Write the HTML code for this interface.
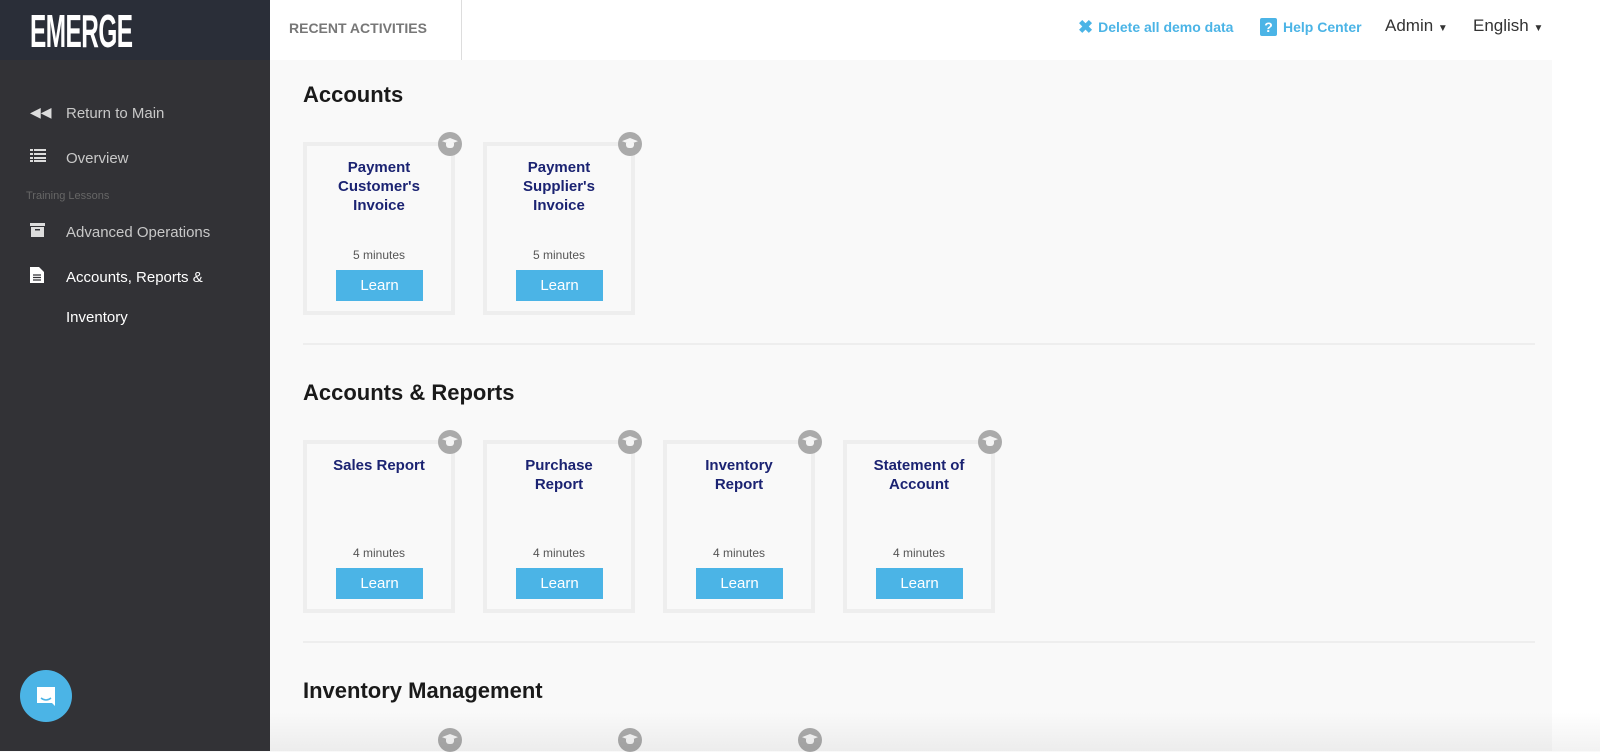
<!DOCTYPE html><html><head><style>
*{margin:0;padding:0;box-sizing:border-box}
body{width:1600px;height:751px;overflow:hidden;font-family:"Liberation Sans",sans-serif;background:#f9f9f9;position:relative}
.side{position:absolute;left:0;top:0;width:270px;height:751px;background:#323236}
.logobg{position:absolute;left:0;top:0;width:270px;height:60px;background:#2a2e38}
.nav{position:absolute;left:66px;color:#c8c8c8;font-size:15px}
.ico{position:absolute;left:30px;color:#ddd}
.top{position:absolute;left:270px;top:0;right:0;height:60px;background:#fff}
.ra{position:absolute;left:289px;top:20px;color:#777;font-weight:bold;font-size:14px}
.sep{position:absolute;left:461px;top:0;width:1px;height:60px;background:#ddd}
.h{position:absolute;left:303px;font-size:22px;font-weight:bold;color:#1a1a1a}
.hr{position:absolute;left:303px;width:1232px;height:2px;background:#eee}
.card{position:absolute;width:152px;height:173px;border:4px solid #eee;background:#f9f9f9;text-align:center}
.card .t{position:absolute;top:12px;left:0;right:0;font-weight:bold;font-size:15px;color:#1b2372;line-height:19px}
.card .m{position:absolute;top:102px;left:0;right:0;font-size:12px;color:#555}
.card .b{position:absolute;top:124px;left:29px;width:87px;height:31px;background:#4bb4e6;color:#fff;font-size:15px;line-height:31px}
.badge{position:absolute;width:24px;height:24px;border-radius:50%;background:#aaa;}
.badge:before{content:"";position:absolute;left:8px;top:11px;width:8px;height:5px;background:#f4f4f4;border-radius:0 0 3px 3px}
.badge:after{content:"";position:absolute;left:4px;top:6px;width:16px;height:7px;background:#f4f4f4;clip-path:polygon(50% 0,100% 45%,50% 90%,0 45%)}
</style></head><body>
<div class="side"></div><div class="logobg"></div>
<div style="position:absolute;left:30px;top:4px;color:#fff;font:bold 46px 'Liberation Sans';transform:scaleX(.53);transform-origin:left;letter-spacing:-1px">EMERGE</div>
<div class="ico" style="top:104px;font-size:14px">◀◀</div><div class="nav" style="top:105px">Return to Main</div>
<div class="ico" style="top:149px"><svg width="16" height="13"><g fill="#ddd"><rect y="0" width="3" height="2"/><rect x="4" y="0" width="12" height="2"/><rect y="4" width="3" height="2"/><rect x="4" y="4" width="12" height="2"/><rect y="8" width="3" height="2"/><rect x="4" y="8" width="12" height="2"/><rect y="11" width="3" height="2"/><rect x="4" y="11" width="12" height="2"/></g></svg></div><div class="nav" style="top:150px">Overview</div>
<div style="position:absolute;left:26px;top:190px;color:#666;font-size:11px">Training Lessons</div>
<div class="ico" style="top:223px"><svg width="15" height="14"><rect width="15" height="3" fill="#ddd"/><rect x="1" y="4" width="13" height="10" fill="#ddd"/><rect x="5" y="6" width="5" height="1.5" fill="#323236"/></svg></div><div class="nav" style="top:224px">Advanced Operations</div>
<div class="ico" style="top:267px"><svg width="14" height="16"><path d="M0 0h9l5 5v11H0z" fill="#fff"/><path d="M3 8h8M3 10.5h8M3 13h8" stroke="#323236" stroke-width="1.2"/></svg></div>
<div class="nav" style="top:269px;color:#fff">Accounts, Reports &amp;</div><div class="nav" style="top:309px;color:#fff">Inventory</div>
<div style="position:absolute;left:20px;top:670px;width:52px;height:52px;border-radius:50%;background:#4bb4e6"><svg width="52" height="52"><path d="M17 17h18v19l-3-3H17z" fill="#fff"/><path d="M21 28q5 4 10 0" stroke="#4bb4e6" stroke-width="1.5" fill="none"/></svg></div>
<div class="top"></div><div class="ra">RECENT ACTIVITIES</div><div class="sep"></div>
<div style="position:absolute;left:1078px;top:17px;color:#4bb4e6;font-size:14px;font-weight:bold;display:flex;align-items:center;gap:5px;height:20px"><span style="font-size:18px">✖</span>Delete all demo data</div>
<div style="position:absolute;left:1260px;top:17px;color:#4bb4e6;font-size:14px;font-weight:bold;display:flex;align-items:center;gap:6px;height:20px"><span style="display:inline-block;width:17px;height:18px;background:#4bb4e6;color:#fff;text-align:center;border-radius:2px;line-height:18px">?</span>Help Center</div>
<div style="position:absolute;left:1385px;top:16px;color:#333;font-size:17px">Admin <span style="font-size:10px">▼</span></div>
<div style="position:absolute;left:1473px;top:16px;color:#333;font-size:17px">English <span style="font-size:10px">▼</span></div>
<div style="position:absolute;left:1552px;top:60px;width:48px;height:691px;background:#fff"></div>
<div class="h" style="top:82px">Accounts</div>
<div class="h" style="top:380px">Accounts &amp; Reports</div>
<div class="h" style="top:678px">Inventory Management</div>
<div class="hr" style="top:343px"></div><div class="hr" style="top:641px"></div>
<div class="card" style="left:303px;top:142px"><div class="t">Payment<br>Customer's<br>Invoice</div><div class="m">5 minutes</div><div class="b">Learn</div></div>
<div class="card" style="left:483px;top:142px"><div class="t">Payment<br>Supplier's<br>Invoice</div><div class="m">5 minutes</div><div class="b">Learn</div></div>
<div class="card" style="left:303px;top:440px"><div class="t">Sales Report</div><div class="m">4 minutes</div><div class="b">Learn</div></div>
<div class="card" style="left:483px;top:440px"><div class="t">Purchase<br>Report</div><div class="m">4 minutes</div><div class="b">Learn</div></div>
<div class="card" style="left:663px;top:440px"><div class="t">Inventory<br>Report</div><div class="m">4 minutes</div><div class="b">Learn</div></div>
<div class="card" style="left:843px;top:440px"><div class="t">Statement of<br>Account</div><div class="m">4 minutes</div><div class="b">Learn</div></div>
<div class="badge" style="left:438px;top:132px"></div><div class="badge" style="left:618px;top:132px"></div>
<div class="badge" style="left:438px;top:430px"></div><div class="badge" style="left:618px;top:430px"></div><div class="badge" style="left:798px;top:430px"></div><div class="badge" style="left:978px;top:430px"></div>
<div class="badge" style="left:438px;top:728px"></div><div class="badge" style="left:618px;top:728px"></div><div class="badge" style="left:798px;top:728px"></div>
<div style="position:absolute;left:270px;top:712px;width:1330px;height:39px;background:linear-gradient(rgba(0,0,0,0),rgba(0,0,0,.05))"></div>
</body></html>
